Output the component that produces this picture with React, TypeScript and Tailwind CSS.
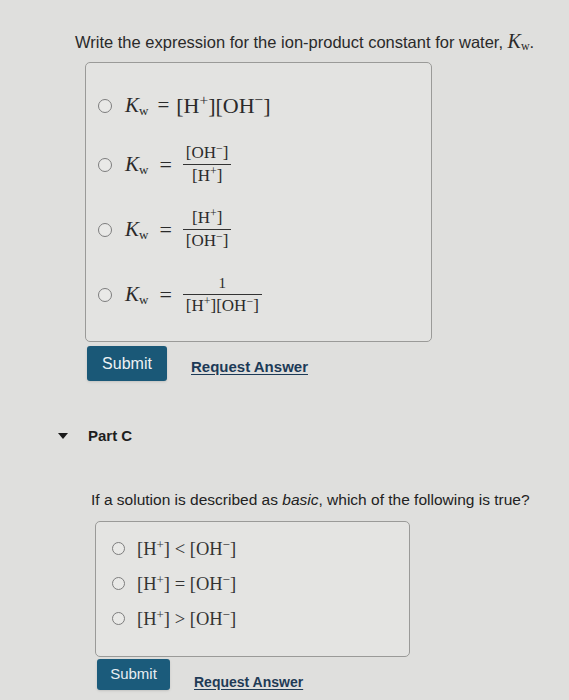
import React from 'react';

const serif = { fontFamily: '"Liberation Serif", "DejaVu Serif", serif' };

function Radio({ size = 14 }: { size?: number }) {
  return (
    <span
      className="inline-block shrink-0 rounded-full border-[1.5px] border-[#7d7d7d] bg-[#e9e9e7]"
      style={{ width: size, height: size }}
    />
  );
}

function Kw() {
  return (
    <span className="italic text-[21px]">
      K<span className="not-italic text-[13px] leading-[0] align-[-0.2em]">w</span>
    </span>
  );
}

// bracketed ion with its charge raised after the symbol
function Ion({ sym, charge }: { sym: string; charge: string }) {
  return (
    <span>
      [{sym}
      <span className="text-[0.7em] leading-[0] align-[0.5em]">{charge}</span>]
    </span>
  );
}

function Frac({ top, bottom }: { top: React.ReactNode; bottom: React.ReactNode }) {
  return (
    <span className="inline-flex flex-col items-center text-[17px] leading-[22px]">
      <span className="px-[3px]">{top}</span>
      <span className="w-full h-px bg-[#333]" />
      <span className="px-[3px]">{bottom}</span>
    </span>
  );
}

const H = <Ion sym="H" charge="+" />;
const OH = <Ion sym="OH" charge="−" />;

function MathOption({ children }: { children: React.ReactNode }) {
  return (
    <label className="flex items-center gap-[13px] text-[#2a2a2a]" style={serif}>
      <Radio />
      <span className="flex items-center gap-[9px]">{children}</span>
    </label>
  );
}

function Buttons({ small }: { small?: boolean }) {
  return (
    <div className="flex items-end gap-[24px]">
      <button
        className={
          small
            ? 'w-[73px] h-[31px] rounded-[3px] bg-[#1b5b7b] text-[15px] text-[#e8eef2] shadow-sm'
            : 'w-[80px] h-[35px] rounded-[3px] bg-[#1a5877] text-[16px] text-[#eef2f4] shadow-sm'
        }
      >
        Submit
      </button>
      <a
        className={
          small
            ? 'mb-[-3px] text-[14px] font-bold text-[#1f3b56] underline underline-offset-2'
            : 'mb-[3px] text-[15px] font-bold text-[#1c3a57] underline underline-offset-2'
        }
      >
        Request Answer
      </a>
    </div>
  );
}

export default function App() {
  return (
    <div
      className="w-full h-[700px] overflow-hidden bg-[#dfdfdd] pl-[75px] pt-[29px] text-[#222]"
      style={{ fontFamily: '"Liberation Sans", Arial, sans-serif' }}
    >
      <p className="text-[16.5px] leading-[24px] text-[#2a2a2a]">
        Write the expression for the ion-product constant for water,{' '}
        <span className="text-[20px]" style={serif}>
          <span className="italic">K</span>
          <span className="text-[12px] leading-[0] align-[-0.15em]">w</span>
        </span>
        .
      </p>

      <div className="ml-[10px] mt-[8px] w-[347px] h-[280px] rounded-[5px] border border-[#9a9a98] bg-[#e3e3e1] pl-[12px] pt-[26px] flex flex-col gap-[20px]">
        <MathOption>
          <Kw />
          <span className="text-[21px]">=</span>
          <span className="text-[22px] ml-[-2px]">
            {H}
            {OH}
          </span>
        </MathOption>
        <MathOption>
          <Kw />
          <span className="text-[22px] mx-[2px]">=</span>
          <Frac top={OH} bottom={H} />
        </MathOption>
        <MathOption>
          <Kw />
          <span className="text-[22px] mx-[2px]">=</span>
          <Frac top={H} bottom={OH} />
        </MathOption>
        <MathOption>
          <Kw />
          <span className="text-[22px] mx-[2px]">=</span>
          <Frac
            top={<span className="text-[15px]">1</span>}
            bottom={
              <>
                {H}
                {OH}
              </>
            }
          />
        </MathOption>
      </div>

      <div className="ml-[12px] mt-[4px]">
        <Buttons />
      </div>

      <div className="mt-[44px] ml-[-17px] flex items-center gap-[20px]">
        <span className="w-0 h-0 border-l-[5px] border-r-[5px] border-t-[6px] border-l-transparent border-r-transparent border-t-[#1a1a1a]" />
        <span className="text-[15px] font-bold text-[#1e1e1e]">Part C</span>
      </div>

      <p className="ml-[16px] mt-[40px] text-[15.5px] text-[#222]">
        If a solution is described as <i>basic</i>, which of the following is true?
      </p>

      <div
        className="ml-[20px] mt-[10px] w-[315px] h-[136px] rounded-[5px] border border-[#9a9a98] bg-[#e4e4e2] pl-[16px] pt-[15px] flex flex-col gap-[11px] text-[18.5px] leading-[24px] text-[#333]"
        style={serif}
      >
        <div className="flex items-center gap-[12px]">
          <Radio size={13} />
          <span>
            {H} &lt; {OH}
          </span>
        </div>
        <div className="flex items-center gap-[12px]">
          <Radio size={13} />
          <span>
            {H} = {OH}
          </span>
        </div>
        <div className="flex items-center gap-[12px]">
          <Radio size={13} />
          <span>
            {H} &gt; {OH}
          </span>
        </div>
      </div>

      <div className="ml-[22px] mt-[2px]">
        <Buttons small />
      </div>
    </div>
  );
}
